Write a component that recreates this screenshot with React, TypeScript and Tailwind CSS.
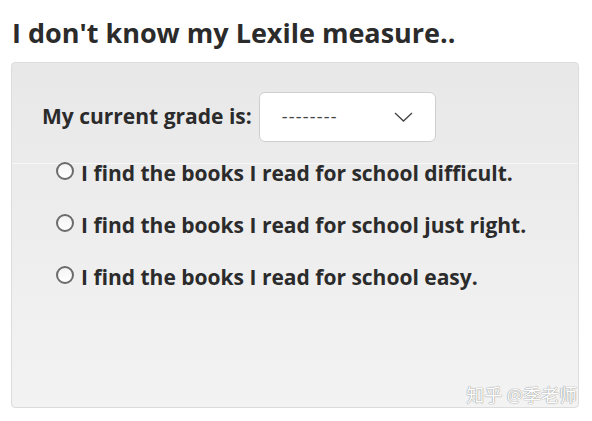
import React from "react";

const font = { fontFamily: '"Open Sans", "Noto Sans CJK SC", sans-serif' };

const options = [
  "I find the books I read for school difficult.",
  "I find the books I read for school just right.",
  "I find the books I read for school easy.",
];

const Radio = () => (
  <span className="w-[18px] h-[18px] rounded-full border-2 border-[#6b6b6b] bg-gradient-to-b from-[#f4f4f4] to-white shrink-0 mt-[-5px]"></span>
);

export default function App() {
  return (
    <div className="w-[592px] h-[421px] bg-white text-[#2b2b2b] overflow-hidden" style={font}>
      <h1 className="pl-3 pt-[13px] text-[27px] leading-[40px] font-bold">
        I don't know my Lexile measure..
      </h1>
      <div className="relative ml-[11px] mt-[9px] w-[568px] h-[346px] rounded-[4px] border border-[#dcdcdc] bg-gradient-to-b from-[#e8e8e8] to-[#f3f3f3]">
        <div className="flex items-center h-[100px] pl-[30px] pt-[7px]">
          <span className="text-[21px] font-bold">My current grade is:</span>
          <div className="ml-[7px] w-[177px] h-[50px] bg-white border-[1.5px] border-[#cfcfcf] rounded-[6px] flex items-center justify-between pl-[22px] pr-[22px]">
            <span className="text-[18px] text-[#444] tracking-[1.2px]">--------</span>
            <svg width="19" height="10" viewBox="0 0 19 10" fill="none">
              <path d="M1 1 L9.5 9 L18 1" stroke="#444" strokeWidth="1.3" />
            </svg>
          </div>
        </div>
        <div className="border-t border-white/60">
          <div className="-mt-[17px]">
            {options.map((o) => (
              <div key={o} className="flex items-center pl-[44px] h-[52px]">
                <Radio />
                <span className="ml-[7px] text-[21px] font-bold leading-[28px]">{o}</span>
              </div>
            ))}
          </div>
        </div>
        <span
          className="absolute right-[1px] bottom-[-2px] text-[18px] text-white"
          style={{ textShadow: "0 0 1px #888, 0 0 1px #999" }}
        >
          知乎 @季老师
        </span>
      </div>
    </div>
  );
}
